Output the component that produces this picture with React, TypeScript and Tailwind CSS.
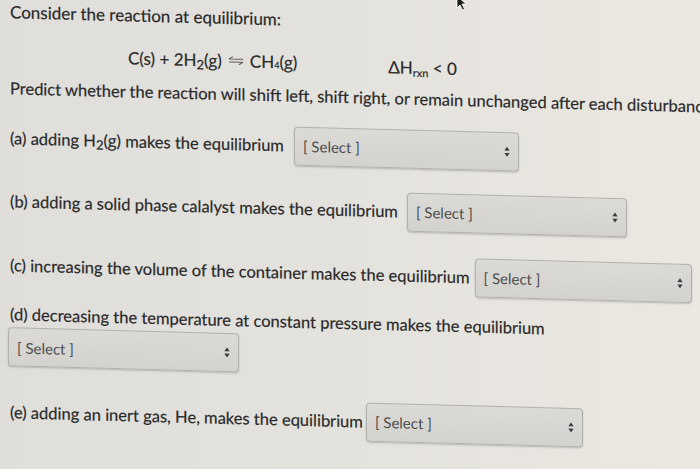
import React from "react";

const font = { fontFamily: "Lato, 'Open Sans', sans-serif" };

function Arrows() {
  return (
    <svg width="6" height="11" viewBox="0 0 6 11" className="shrink-0">
      <path d="M3 0.5 L5.6 4.3 L0.4 4.3 Z" fill="#3a3a3a" />
      <path d="M3 10.5 L5.6 6.7 L0.4 6.7 Z" fill="#3a3a3a" />
    </svg>
  );
}

function Equil() {
  return (
    <svg width="16" height="9" viewBox="0 0 16 9" className="inline-block mx-[6px] align-[2px]">
      <path d="M1 3 L15 3 M1 3 L5 0.5" stroke="#5a5a5a" strokeWidth="1" fill="none" />
      <path d="M1 6 L15 6 M15 6 L11 8.5" stroke="#5a5a5a" strokeWidth="1" fill="none" />
    </svg>
  );
}

function Select({ w }: { w: string }) {
  return (
    <div
      className={`${w} h-[39px] shrink-0 rounded-[4px] border border-[#b2b1ae] bg-gradient-to-b from-[#dbdad7] to-[#d3d2cf] shadow-[0_1px_2px_rgba(0,0,0,0.2)] flex items-center justify-between pl-[8px] pr-[8px]`}
    >
      <span className="text-[15px] leading-[16px] text-[#4e4e4e] [-webkit-text-stroke:0px]">[ Select ]</span>
      <Arrows />
    </div>
  );
}

const G = () => (
  <span style={{ fontFamily: "'Open Sans', sans-serif" }} className="text-[16px]">
    g
  </span>
);

export default function App() {
  return (
    <div
      className="relative w-[700px] h-[469px] overflow-hidden bg-gradient-to-r from-[#dfdedb] via-[#e4e2dd] to-[#ebe8e1]"
      style={font}
    >
      <div className="skew-y-[1.5deg] origin-top-left pl-[10px] pt-[2px] text-[#2a2a2a] text-[16.5px] leading-[20px] [-webkit-text-stroke:0.2px_#2a2a2a]">
        <div className="whitespace-nowrap text-[17px]">Consider the reaction at equilibrium:</div>

        <div className="mt-[23px] flex items-start whitespace-nowrap text-[17px]">
          <span className="ml-[118px]">
            C(s) + 2H<sub className="text-[13px]">2</sub>(<G />)
            <Equil />
            CH<sub className="text-[9px] align-[2px]">4</sub>(<G />)
          </span>
          <span className="ml-[91px] mt-[2px]">
            ΔH<sub className="text-[11px]">rxn</sub> &lt; 0
          </span>
        </div>

        <div className="mt-[11px] whitespace-nowrap">
          Predict whether the reaction will shift left, shift right, or remain unchanged after each disturbance
        </div>

        <div className="mt-[20px] h-[40px] flex items-center gap-[10px] whitespace-nowrap">
          <span>
            (a) adding H<sub className="text-[13px]">2</sub>(<G />) makes the equilibrium
          </span>
          <Select w="w-[225px]" />
        </div>

        <div className="mt-[23px] h-[40px] flex items-center gap-[9px] whitespace-nowrap">
          <span>(b) adding a solid phase calalyst makes the equilibrium</span>
          <Select w="w-[220px]" />
        </div>

        <div className="mt-[24px] h-[40px] flex items-center gap-[5px] whitespace-nowrap">
          <span>(c) increasing the volume of the container makes the equilibrium</span>
          <Select w="w-[217px]" />
        </div>

        <div className="mt-[19px] whitespace-nowrap">
          (d) decreasing the temperature at constant pressure makes the equilibrium
        </div>
        <div className="mt-[3px] -ml-[2px]">
          <Select w="w-[231px]" />
        </div>

        <div className="mt-[26px] h-[40px] flex items-center gap-[3px] whitespace-nowrap">
          <span>(e) adding an inert gas, He, makes the equilibrium</span>
          <Select w="w-[217px]" />
        </div>
      </div>

      <svg className="absolute left-[455px] top-[-4px]" width="14" height="16" viewBox="0 0 14 16">
        <path d="M2 0 L2 12 L5 9 L7.5 14 L9.5 13 L7 8 L11 8 Z" fill="#1a1a1a" stroke="#fff" strokeWidth="0.8" />
      </svg>
    </div>
  );
}
